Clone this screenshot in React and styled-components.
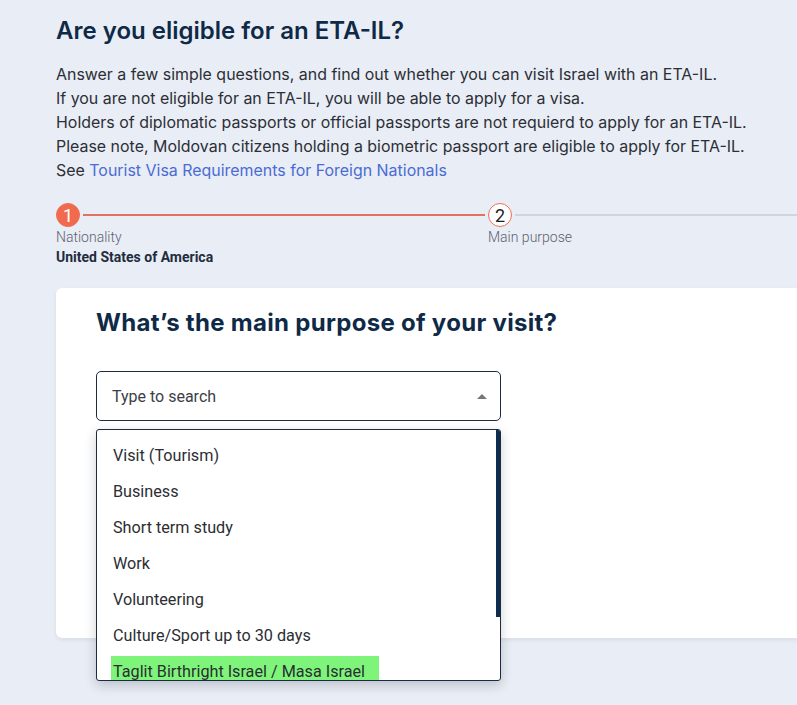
import React from "react";
import styled, { createGlobalStyle } from "styled-components";

const GlobalStyle = createGlobalStyle`
  html, body { margin: 0; padding: 0; }
  body {
    background: #e9edf5;
    font-family: Inter, "Noto Sans", sans-serif;
  }
`;

const Viewport = styled.div`
  min-height: 100vh;
  overflow: hidden;
  background: #e9edf5;
`;

const Page = styled.div`
  padding: 15px 0 0 56px;
  width: 1100px;
`;

const Title = styled.h1`
  margin: 0;
  font-family: Inter, "Noto Sans", sans-serif;
  font-weight: 600;
  font-size: 24px;
  line-height: 32px;
  color: #0f2a47;
`;

const Intro = styled.p`
  margin: 16px 0 0;
  font-family: Inter, "Noto Sans", sans-serif;
  font-size: 15.95px;
  line-height: 24px;
  color: #2c2f36;
`;

const Link = styled.a`
  color: #4a6cd4;
  text-decoration: none;
`;

const Stepper = styled.div`
  display: grid;
  grid-template-columns: repeat(3, 432px);
  margin-top: 20px;
  font-family: Roboto, sans-serif;
`;

const Step = styled.div`
  display: flex;
  flex-direction: column;
`;

const StepHead = styled.div`
  display: flex;
  align-items: center;
  height: 24px;
`;

const Circle = styled.div`
  width: 24px;
  height: 24px;
  box-sizing: border-box;
  border-radius: 50%;
  display: flex;
  align-items: center;
  justify-content: center;
  font-size: 18px;
  flex: none;
  background: ${(p) => (p.$done ? "#f26a4e" : "#ffffff")};
  color: ${(p) => (p.$done ? "#ffffff" : "#1d1d1d")};
  border: 1px solid #ee7055;
`;

const Line = styled.div`
  flex: 1;
  height: 2px;
  margin: 0 3px;
  background: ${(p) => (p.$done ? "#e0735d" : "#cfd4de")};
`;

const StepLabel = styled.div`
  font-size: 14px;
  font-weight: 300;
  line-height: 20px;
  color: #5c6270;
`;

const StepValue = styled.div`
  font-size: 14px;
  font-weight: 700;
  line-height: 20px;
  color: #1f2c3d;
`;

const Card = styled.div`
  margin-top: 21px;
  background: #ffffff;
  border-radius: 6px;
  box-shadow: 0 2px 4px rgba(30, 40, 60, 0.08);
  height: 350px;
  box-sizing: border-box;
  padding: 20px 40px;
`;

const CardTitle = styled.h2`
  margin: 0;
  font-family: Inter, "Noto Sans", sans-serif;
  font-weight: 700;
  font-size: 24px;
  letter-spacing: 0.3px;
  line-height: 30px;
  color: #0f2a47;
`;

const SelectWrap = styled.div`
  position: relative;
  width: 405px;
  margin-top: 33px;
`;

const SelectBox = styled.div`
  height: 50px;
  box-sizing: border-box;
  border: 1px solid #1b2c42;
  border-radius: 5px;
  display: flex;
  align-items: center;
  justify-content: space-between;
  padding: 0 13px 0 15px;
  font-family: Roboto, sans-serif;
  font-size: 16px;
  color: #3b3f45;
`;

const Caret = styled.span`
  width: 0;
  height: 0;
  border-left: 5px solid transparent;
  border-right: 5px solid transparent;
  border-bottom: 5px solid #777;
`;

const Menu = styled.div`
  position: absolute;
  top: 58px;
  left: 0;
  width: 405px;
  height: 252px;
  box-sizing: border-box;
  background: #ffffff;
  border: 1px solid #1d2b3e;
  border-radius: 3px;
  box-shadow: 0 4px 12px rgba(20, 30, 50, 0.22);
  overflow: hidden;
  font-family: Roboto, sans-serif;
`;

const OptionList = styled.ul`
  margin: 0;
  padding: 8px 0 0;
  list-style: none;
`;

const ScrollThumb = styled.div`
  position: absolute;
  top: 0;
  right: 0;
  width: 4px;
  height: 187px;
  background: #0d2c4e;
`;

const Option = styled.li`
  height: 36px;
  display: flex;
  align-items: center;
  padding-left: 14px;
  font-size: 16.2px;
  color: #2b2e33;
`;

const OptionText = styled.span`
  padding: 0 14px 0 2px;
  line-height: 32px;
  background: ${(p) => (p.$hl ? "#7ef57a" : "transparent")};
`;

const options = [
  "Visit (Tourism)",
  "Business",
  "Short term study",
  "Work",
  "Volunteering",
  "Culture/Sport up to 30 days",
  "Taglit Birthright Israel / Masa Israel",
];

export default function App() {
  return (
    <Viewport>
      <GlobalStyle />
      <Page>
        <Title>Are you eligible for an ETA-IL?</Title>
        <Intro>
          Answer a few simple questions, and find out whether you can visit Israel with an ETA-IL.
          <br />
          If you are not eligible for an ETA-IL, you will be able to apply for a visa.
          <br />
          Holders of diplomatic passports or official passports are not requierd to apply for an ETA-IL.
          <br />
          Please note, Moldovan citizens holding a biometric passport are eligible to apply for ETA-IL.
          <br />
          See <Link href="#">Tourist Visa Requirements for Foreign Nationals</Link>
        </Intro>
        <Stepper>
          <Step>
            <StepHead>
              <Circle $done>1</Circle>
              <Line $done />
            </StepHead>
            <StepLabel>Nationality</StepLabel>
            <StepValue>United States of America</StepValue>
          </Step>
          <Step>
            <StepHead>
              <Circle>2</Circle>
              <Line />
            </StepHead>
            <StepLabel>Main purpose</StepLabel>
          </Step>
          <Step>
            <StepHead>
              <Line />
            </StepHead>
          </Step>
        </Stepper>
        <Card>
          <CardTitle>What’s the main purpose of your visit?</CardTitle>
          <SelectWrap>
            <SelectBox>
              Type to search
              <Caret />
            </SelectBox>
            <Menu>
              <OptionList>
                {options.map((o, i) => (
                  <Option key={o}>
                    <OptionText $hl={i === 6}>{o}</OptionText>
                  </Option>
                ))}
              </OptionList>
              <ScrollThumb />
            </Menu>
          </SelectWrap>
        </Card>
      </Page>
    </Viewport>
  );
}
